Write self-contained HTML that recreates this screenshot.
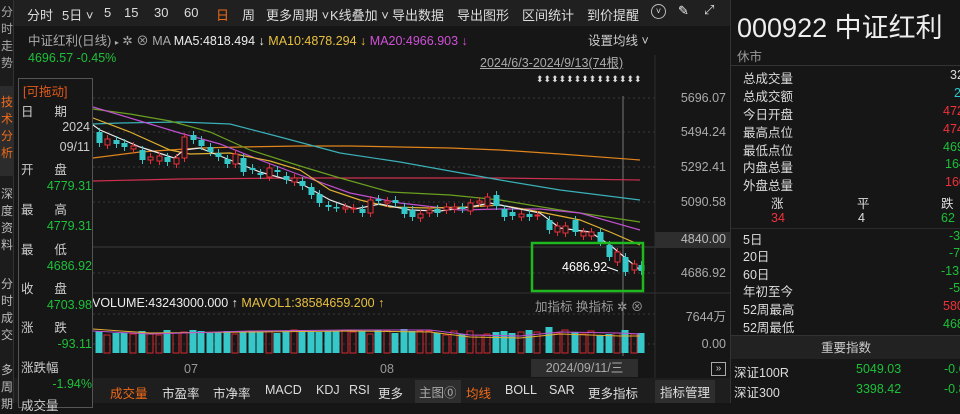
<!DOCTYPE html>
<html><head><meta charset="utf-8"><style>
*{margin:0;padding:0;box-sizing:border-box}
body{width:960px;height:403px;background:#161616;font-family:"Liberation Sans","Noto Sans CJK SC",sans-serif;color:#ccc;position:relative;overflow:hidden;font-size:12px}
.a{position:absolute;white-space:nowrap}
.tb{position:absolute;left:14px;top:0;width:716px;height:26px;background:#202020}
.tb span{position:absolute;top:5px;font-size:13px;color:#ddd}
.side{position:absolute;left:0;top:0;width:14px;height:403px;background:#1c1c1c;border-right:1px solid #333}
.side div{position:absolute;left:0;width:14px;font-size:12px;line-height:17px;text-align:center;color:#bbb}
.info{position:absolute;left:18px;top:78px;width:75px;height:330px;border:1px solid #555;background:#161616}
.info div{position:absolute;font-size:12.5px}
.g{color:#1ec03a !important}.r{color:#f0323a !important}.c{color:#2fc8d0 !important}
.rp{position:absolute;left:730px;top:0;width:230px;height:403px;background:#161616;border-left:1px solid #333}
.rp .l{position:absolute;left:12px;font-size:12.5px;color:#ddd}
.rp .v{position:absolute;left:215px;font-size:12.5px}
.bt span{position:absolute;top:383px;font-size:12.5px;color:#ddd}
</style></head><body>
<div class="side">
<div style="top:4px;color:#aaa">分<br>时<br>走<br>势</div>
<div style="top:86px;height:90px;background:#2c2c2c;color:#f06a1a;padding-top:8px">技<br>术<br>分<br>析</div>
<div style="top:186px">深<br>度<br>资<br>料</div>
<div style="top:276px">分<br>时<br>成<br>交</div>
<div style="top:362px">多<br>周<br>期</div>
</div>
<div class="tb">
<span style="left:13px">分时</span><span style="left:48px">5日 ˅</span><span style="left:90px">5</span><span style="left:110px">15</span><span style="left:140px">30</span><span style="left:170px">60</span><span style="left:202px;color:#f06a1a">日</span><span style="left:228px">周</span><span style="left:252px">更多周期 ˅</span><span style="left:316px">K线叠加 ˅</span><span style="left:378px">导出数据</span><span style="left:443px">导出图形</span><span style="left:508px">区间统计</span><span style="left:573px">到价提醒</span>
<span style="left:637px;top:4px;width:15px;height:15px;border:1.5px solid #bbb;border-radius:50%;font-size:9px;text-align:center;line-height:12px">˅</span>
<span style="left:664px;top:3px;color:#eee">✎</span><span style="left:690px;top:2px;font-size:13px">⤢</span>
</div>
<div class="a" style="left:28px;top:30px;font-size:12.5px;color:#aaa">中证红利(日线) <span style="font-size:8px">▸</span> ✲ ⊗ MA <span style="color:#eee">MA5:4818.494 ↓</span> <span style="color:#e8c040">MA10:4878.294 ↓</span> <span style="color:#d050d8">MA20:4966.903 ↓</span></div>
<div class="a g" style="left:28px;top:51px;font-size:12.5px">4696.57 -0.45%</div>
<div class="a" style="left:588px;top:30px;font-size:12.5px;color:#ccc">设置均线 ˅</div>
<div class="a" style="left:480px;top:52px;font-size:12.5px;color:#aaa;text-decoration:underline">2024/6/3-2024/9/13(74根)</div>
<div class="a" style="left:536px;top:74px;font-size:9px;color:#ddd;letter-spacing:0">⬍⬍⬍⬍⬍⬍⬍⬍⬍⬍⬍⬍⬍⬍</div>
<svg class="a" style="left:0;top:0" width="730" height="403">
<g stroke="#3a3a3a" stroke-dasharray="2,3"><line x1="93" y1="98" x2="655" y2="98"/><line x1="93" y1="132" x2="655" y2="132"/><line x1="93" y1="167" x2="655" y2="167"/><line x1="93" y1="202" x2="655" y2="202"/><line x1="93" y1="273" x2="655" y2="273"/><line x1="93" y1="314" x2="655" y2="314"/><line x1="93" y1="344" x2="655" y2="344"/></g>
<line x1="93" y1="247" x2="655" y2="247" stroke="#3c3c3c"/>
<line x1="93" y1="293" x2="730" y2="293" stroke="#333"/>
<line x1="655" y1="55" x2="655" y2="378" stroke="#2e2e2e"/>
<line x1="623" y1="96" x2="623" y2="356" stroke="#777"/>
<g fill="none" stroke-width="1.2">
<polyline stroke="#d03050" points="93,181 180,179 300,178 500,178 640,180"/>
<polyline stroke="#e0841c" points="93,158 140,152 200,148 240,147 300,146 350,146 400,147 450,148 500,150 560,154 640,160"/>
<polyline stroke="#3ab0b8" points="93,124 120,123 180,122 230,124 280,137 340,153 400,162 450,171 500,180 560,190 640,200"/>
<polyline stroke="#6aa020" points="93,109 130,114 170,121 210,132 250,150 300,166 340,178 390,192 450,195 500,200 560,210 640,222"/>
<polyline stroke="#c050d0" points="93,107 140,121 180,133 220,144 260,160 300,175 350,193 400,203 460,210 500,209 540,209 580,213 640,230"/>
<polyline stroke="#e0b030" points="93,118 130,132 170,150 190,154 230,153 270,161 300,170 330,190 360,200 390,207 430,208 470,207 500,205 540,212 580,220 610,232 640,245"/>
<polyline stroke="#e8e8e8" points="93,125 100,130 140,147 165,155 174,158 184,150 200,148 230,160 260,172 300,183 330,200 355,209 380,204 410,210 440,211 470,207 490,203 505,206 540,213 560,228 590,232 610,245 640,270"/>
</g>
<g id="k"></g>
<rect x="532" y="243" width="111" height="48" fill="none" stroke="#1fb81f" stroke-width="2.5"/>
<text x="562" y="271" fill="#fff" font-size="12.5" font-family="Liberation Sans">4686.92</text>
<line x1="607" y1="267" x2="618" y2="271" stroke="#fff"/>
<g id="v"></g>
<polyline fill="none" stroke="#e0b030" points="93,329 150,333 250,332 350,331 430,332 470,337 520,338 560,334 620,336 640,336"/>
<polyline fill="none" stroke="#c050d0" points="93,331 150,334 250,331 350,330 430,330 470,335 520,336 560,332 620,333 640,334"/>
</svg>
<div class="a" style="left:92px;top:296px;font-size:12.5px;color:#eee">VOLUME:43243000.000 ↑ <span style="color:#e8c040">MAVOL1:38584659.200 ↑</span></div>
<div class="a" style="left:535px;top:296px;font-size:12.5px;color:#999">加指标 换指标 ✲ ⊗</div>
<div class="a" style="left:184px;top:362px;font-size:12.5px;color:#999">07</div>
<div class="a" style="left:380px;top:362px;font-size:12.5px;color:#999">08</div>
<div class="a" style="left:531px;top:359px;width:107px;height:18px;background:#2e2e2e;color:#aaa;font-size:12.5px;text-align:center;line-height:18px">2024/09/11/三</div>
<div class="a" style="left:711px;top:362px;width:15px;height:14px;border:1px solid #aaa;font-size:10px;line-height:12px;text-align:center;color:#ccc">»</div>
<div class="a" style="left:655px;top:91px;width:75px;text-align:right;padding-right:4px;color:#aaa;font-size:12.5px">5696.07</div>
<div class="a" style="left:655px;top:125px;width:75px;text-align:right;padding-right:4px;color:#aaa;font-size:12.5px">5494.24</div>
<div class="a" style="left:655px;top:160px;width:75px;text-align:right;padding-right:4px;color:#aaa;font-size:12.5px">5292.41</div>
<div class="a" style="left:655px;top:195px;width:75px;text-align:right;padding-right:4px;color:#aaa;font-size:12.5px">5090.58</div>
<div class="a" style="left:655px;top:232px;width:75px;height:16px;background:#2e2e2e;text-align:right;padding-right:4px;color:#bbb;font-size:12.5px">4840.00</div>
<div class="a" style="left:655px;top:266px;width:75px;text-align:right;padding-right:4px;color:#aaa;font-size:12.5px">4686.92</div>
<div class="a" style="left:655px;top:306px;width:75px;text-align:right;padding-right:4px;color:#aaa;font-size:12.5px">7644万</div>
<div class="a" style="left:655px;top:337px;width:75px;text-align:right;padding-right:4px;color:#aaa;font-size:12.5px">0.00</div>
<div class="a" style="left:14px;top:378px;width:716px;height:25px;background:#1e1e1e"></div>
<div class="bt">
<span style="left:110px;color:#f06a1a">成交量</span><span style="left:162px">市盈率</span><span style="left:213px">市净率</span><span style="left:265px">MACD</span><span style="left:316px">KDJ</span><span style="left:349px">RSI</span><span style="left:378px">更多</span>
<span style="left:415px;top:380px;background:#2e2e2e;padding:2px 4px;color:#aaa">主图⓪</span><span style="left:466px;color:#f06a1a">均线</span><span style="left:505px">BOLL</span><span style="left:549px">SAR</span><span style="left:588px">更多指标</span>
<span style="left:655px;top:380px;background:#2e2e2e;padding:2px 5px">指标管理</span>
</div>
<div class="info">
<div style="left:4px;top:2px;color:#e05a1a">[可拖动]</div>
<div style="left:2px;top:22px">日&nbsp;&nbsp;&nbsp;&nbsp;&nbsp;&nbsp;期</div>
<div style="right:2px;top:41px">2024</div>
<div style="right:2px;top:61px">09/11</div>
<div style="left:2px;top:80px">开&nbsp;&nbsp;&nbsp;&nbsp;&nbsp;&nbsp;盘</div>
<div class="g" style="right:0;top:100px">4779.31</div>
<div style="left:2px;top:120px">最&nbsp;&nbsp;&nbsp;&nbsp;&nbsp;&nbsp;高</div>
<div class="g" style="right:0;top:140px">4779.31</div>
<div style="left:2px;top:160px">最&nbsp;&nbsp;&nbsp;&nbsp;&nbsp;&nbsp;低</div>
<div class="g" style="right:0;top:180px">4686.92</div>
<div style="left:2px;top:199px">收&nbsp;&nbsp;&nbsp;&nbsp;&nbsp;&nbsp;盘</div>
<div class="g" style="right:0;top:219px">4703.98</div>
<div style="left:2px;top:238px">涨&nbsp;&nbsp;&nbsp;&nbsp;&nbsp;&nbsp;跌</div>
<div class="g" style="right:0;top:258px">-93.11</div>
<div style="left:2px;top:278px">涨跌幅</div>
<div class="g" style="right:0;top:298px">-1.94%</div>
<div style="left:2px;top:316px">成交量</div>
</div>
<div class="rp">
<div class="a" style="left:6px;top:6px;font-size:27px;color:#eee">000922 中证红利</div>
<div class="a" style="left:6px;top:46px;font-size:12.5px;color:#999">休市</div>
<div class="a" style="left:0;top:65px;width:230px;border-top:1px solid #333"></div>
<div class="l" style="top:68px">总成交量</div><div class="v" style="top:68px;left:219px;color:#ddd">324</div>
<div class="l" style="top:86px">总成交额</div><div class="v c" style="top:86px;left:223px">24</div>
<div class="l" style="top:104px">今日开盘</div><div class="v r" style="top:104px;left:212px">472</div>
<div class="l" style="top:122px">最高点位</div><div class="v r" style="top:122px;left:212px">474</div>
<div class="l" style="top:140px">最低点位</div><div class="v g" style="top:140px;left:212px">469</div>
<div class="l" style="top:157px">内盘总量</div><div class="v g" style="top:157px;left:214px">164</div>
<div class="l" style="top:175px">外盘总量</div><div class="v r" style="top:175px;left:214px">160</div>
<div class="l" style="top:193px;left:40px">涨</div><div class="l" style="top:193px;left:126px">平</div><div class="l" style="top:193px;left:210px">跌</div>
<div class="l r" style="top:211px;left:40px">34</div><div class="l" style="top:211px;left:127px">4</div><div class="l g" style="top:211px;left:210px">62</div>
<div class="a" style="left:0;top:228px;width:230px;border-top:1px solid #2a2a2a"></div>
<div class="l" style="top:229px">5日</div><div class="v g" style="top:229px;left:218px">-3.</div>
<div class="l" style="top:246px">20日</div><div class="v g" style="top:246px;left:218px">-7.</div>
<div class="l" style="top:264px">60日</div><div class="v g" style="top:264px;left:210px">-13.</div>
<div class="l" style="top:281px">年初至今</div><div class="v g" style="top:281px;left:218px">-5.</div>
<div class="l" style="top:299px">52周最高</div><div class="v r" style="top:299px;left:212px">580</div>
<div class="l" style="top:317px">52周最低</div><div class="v g" style="top:317px;left:212px">468</div>
<div class="a" style="left:0;top:335px;width:230px;height:24px;background:#222;border-top:1px solid #333;text-align:center;line-height:24px;font-size:12.5px;color:#ccc">重要指数</div>
<div class="l" style="top:362px;left:3px">深证100R</div><div class="l g" style="top:362px;left:125px">5049.03</div><div class="v g" style="top:362px;left:213px">-0.6</div>
<div class="l" style="top:382px;left:3px">深证300</div><div class="l g" style="top:382px;left:125px">3398.42</div><div class="v g" style="top:382px;left:213px">-0.8</div>
</div>
<script>
var c=[[97,132,143,0],[105,139,145,1],[114,140,144,0],[122,143,147,0],[131,146,149,1],[140,150,160,0],[148,157,160,1],[157,156,161,1],[165,157,162,0],[174,158,164,1],[182,137,158,1],[191,135,140,0],[199,140,146,0],[208,147,152,0],[216,153,157,0],[225,159,164,0],[233,154,164,1],[241,158,172,0],[250,168,170,0],[258,173,175,0],[267,168,177,1],[275,170,172,0],[284,176,180,0],[292,178,182,1],[300,181,186,0],[309,187,195,0],[317,194,203,0],[326,205,207,0],[334,207,208,0],[343,207,209,1],[351,208,209,1],[360,209,213,0],[368,200,213,1],[376,199,201,0],[385,201,203,1],[393,200,203,0],[402,207,214,0],[410,210,217,0],[418,214,218,1],[427,210,213,1],[435,209,213,0],[444,207,210,1],[452,207,209,1],[460,207,209,0],[468,203,211,1],[477,201,203,1],[485,197,206,1],[494,195,206,0],[502,209,217,0],[510,212,216,0],[519,214,217,1],[527,214,217,0],[535,215,216,1],[547,220,230,0],[555,226,232,1],[563,226,233,1],[573,220,232,0],[581,232,236,1],[589,232,236,1],[598,232,242,0],[607,245,257,0],[615,252,262,1],[623,257,272,0],[632,264,270,1],[639,265,271,0]];
var s="",v="";
c.forEach(function(d,i){var col=d[3]?"#e8303a":"#36c8c8";
s+='<line x1="'+(d[0]+2.5)+'" y1="'+(d[1]-4)+'" x2="'+(d[0]+2.5)+'" y2="'+(d[2]+4)+'" stroke="'+col+'"/>';
s+=d[3]?'<rect x="'+d[0]+'" y="'+d[1]+'" width="5" height="'+Math.max(1,d[2]-d[1])+'" fill="#161616" stroke="'+col+'"/>':'<rect x="'+(d[0]-0.5)+'" y="'+d[1]+'" width="6" height="'+Math.max(1.5,d[2]-d[1])+'" fill="'+col+'"/>';
var h=[22,18,20,20,19,22,19,18,23,20,21,23,22,20,21,22,19,22,21,21,22,20,22,23,23,22,21,22,22,23,21,22,19,23,22,20,24,22,22,22,20,18,22,19,22,18,19,21,22,20,21,23,21,26,20,23,21,19,22,18,19,20,23,19,20][i]||20;
var y=353-h;
v+=d[3]?'<rect x="'+(d[0]-1)+'" y="'+y+'" width="6" height="'+h+'" fill="none" stroke="#d02830"/>':'<rect x="'+(d[0]-1.5)+'" y="'+y+'" width="7" height="'+h+'" fill="#36c8c8"/>';});
document.getElementById("k").innerHTML=s;document.getElementById("v").innerHTML=v;
</script>
</body></html>
